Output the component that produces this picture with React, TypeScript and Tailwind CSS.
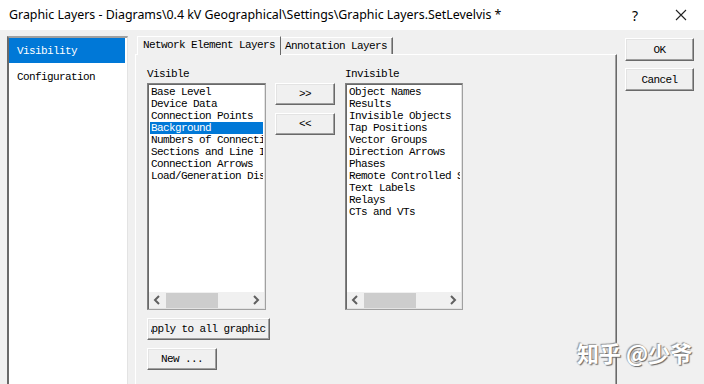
import React from "react";

const mono = "font-['Liberation_Mono',monospace] text-[11px] tracking-[-0.6px] leading-[12px] text-black";

function Btn({ label, className = "" }: { label: string; className?: string }) {
    return (
        <div className={"flex items-center bg-[#f0f0f0] border border-t-white border-l-white border-r-[#696969] border-b-[#696969] shadow-[inset_-1px_-1px_0_#a0a0a0,inset_1px_1px_0_#e3e3e3] " + mono + " " + className}>
            <div className="flex-1 mx-[3px] flex justify-center overflow-hidden whitespace-nowrap">{label}</div>
        </div>
    )
}

function ListBox({ items, selected }: { items: string[]; selected?: string }) {
    return (
        <div className="flex flex-col h-[227px] bg-white border border-t-[#828282] border-l-[#828282] border-r-[#a0a0a0] border-b-[#a0a0a0] shadow-[inset_1px_1px_0_#696969,inset_-1px_-1px_0_#e3e3e3]">
            <div className="flex-1 flex flex-col pt-[2px] pl-[2px] pr-[2px] overflow-hidden">
                {items.map(item => (
                    <div key={item} className={"h-[12px] pl-[1px] whitespace-nowrap overflow-hidden " + mono + (item === selected ? " bg-[#0078d7] !text-white" : "")}>
                        {item}
                    </div>
                ))}
            </div>
            {/* horizontal scrollbar */}
            <div className="h-[16px] mx-[1px] mb-[1px] flex items-center bg-[#f0f0f0]">
                <svg width="17" height="16" viewBox="0 0 17 16" className="shrink-0">
                    <path d="M10 4 L6 8 L10 12" fill="none" stroke="#606060" strokeWidth="2" />
                </svg>
                <div className="w-[52px] h-[15px] bg-[#cdcdcd]" />
                <div className="flex-1" />
                <svg width="17" height="16" viewBox="0 0 17 16" className="shrink-0">
                    <path d="M7 4 L11 8 L7 12" fill="none" stroke="#606060" strokeWidth="2" />
                </svg>
            </div>
        </div>
    )
}

export default function App() {
    const visible = ["Base Level", "Device Data", "Connection Points", "Background", "Numbers of Connections", "Sections and Line Info", "Connection Arrows", "Load/Generation Distribution"];
    const invisible = ["Object Names", "Results", "Invisible Objects", "Tap Positions", "Vector Groups", "Direction Arrows", "Phases", "Remote Controlled Switches", "Text Labels", "Relays", "CTs and VTs"];

    return (
        <div className="relative w-[704px] h-[384px] overflow-hidden bg-[#f0f0f0] flex flex-col">
            {/* Title bar */}
            <div className="h-[30px] shrink-0 bg-white flex items-center pl-[9px] font-['Noto_Sans',sans-serif] text-[12.4px] text-black">
                <span className="flex-1 whitespace-nowrap">Graphic Layers - Diagrams\0.4 kV Geographical\Settings\Graphic Layers.SetLevelvis *</span>
                <span className="w-[46px] text-center text-[14px]">?</span>
                <span className="w-[46px] flex justify-center">
                    <svg width="12" height="12" viewBox="0 0 12 12"><path d="M1 1 L11 11 M11 1 L1 11" stroke="#222" strokeWidth="1.1" /></svg>
                </span>
            </div>

            <div className="flex flex-1 pt-[6px]">
                {/* Left page list */}
                <div className="ml-[7px] w-[121px] h-[360px] shrink-0 bg-white border-l-2 border-t-2 border-l-[#696969] border-t-[#a0a0a0] border-r border-r-[#e3e3e3] pr-[2px]">
                    <div className={"h-[25px] flex items-center pl-[8px] bg-[#0078d7] " + mono + " !text-white"}>Visibility</div>
                    <div className={"h-[28px] flex items-center pl-[8px] " + mono}>Configuration</div>
                </div>

                {/* Tab control */}
                <div className="ml-[7px] w-[482px] shrink-0 flex flex-col">
                    <div className="flex items-end h-[18px] pl-[2px]">
                        <div className={"relative z-10 h-[19px] w-[144px] -mb-[1px] flex items-start pt-[2px] pl-[5px] bg-[#f0f0f0] border-l border-t border-white border-r border-r-[#696969] " + mono}>Network Element Layers</div>
                        <div className={"h-[17px] w-[112px] flex items-center pl-[4px] border-t border-t-white border-r border-r-[#696969] shadow-[inset_-1px_0_0_#a0a0a0] " + mono}>Annotation Layers</div>
                    </div>
                    <div className="flex-1 border-l border-t border-white border-r border-r-[#696969] shadow-[inset_-1px_0_0_#a0a0a0] pl-[11px] pt-[13px]">
                        <div className="flex">
                            <div className="w-[119px] flex flex-col">
                                <div className={"h-[15px] " + mono}>Visible</div>
                                <ListBox items={visible} selected="Background" />
                            </div>
                            <div className="ml-[9px] w-[60px] flex flex-col gap-[8px] pt-[15px]">
                                <Btn label=">>" className="h-[22px]" />
                                <Btn label="<<" className="h-[22px]" />
                            </div>
                            <div className="ml-[10px] w-[118px] flex flex-col">
                                <div className={"h-[15px] " + mono}>Invisible</div>
                                <ListBox items={invisible} />
                            </div>
                        </div>
                        <Btn label="Apply to all graphics" className="mt-[8px] w-[123px] h-[22px]" />
                        <Btn label="New ..." className="mt-[8px] w-[70px] h-[22px]" />
                    </div>
                </div>

                {/* Right buttons */}
                <div className="ml-[8px] w-[69px] shrink-0 flex flex-col gap-[7px] pt-[2px]">
                    <Btn label="OK" className="h-[23px]" />
                    <Btn label="Cancel" className="h-[23px]" />
                </div>
            </div>

            {/* watermark */}
            <div className="absolute left-[577px] top-[338px] font-['Noto_Sans_CJK_SC',sans-serif] font-bold text-[22px] leading-[28px] text-white [text-shadow:1px_1px_1px_#666,-1px_-1px_1px_#999]">知乎 @少爷</div>
        </div>
    )
}
